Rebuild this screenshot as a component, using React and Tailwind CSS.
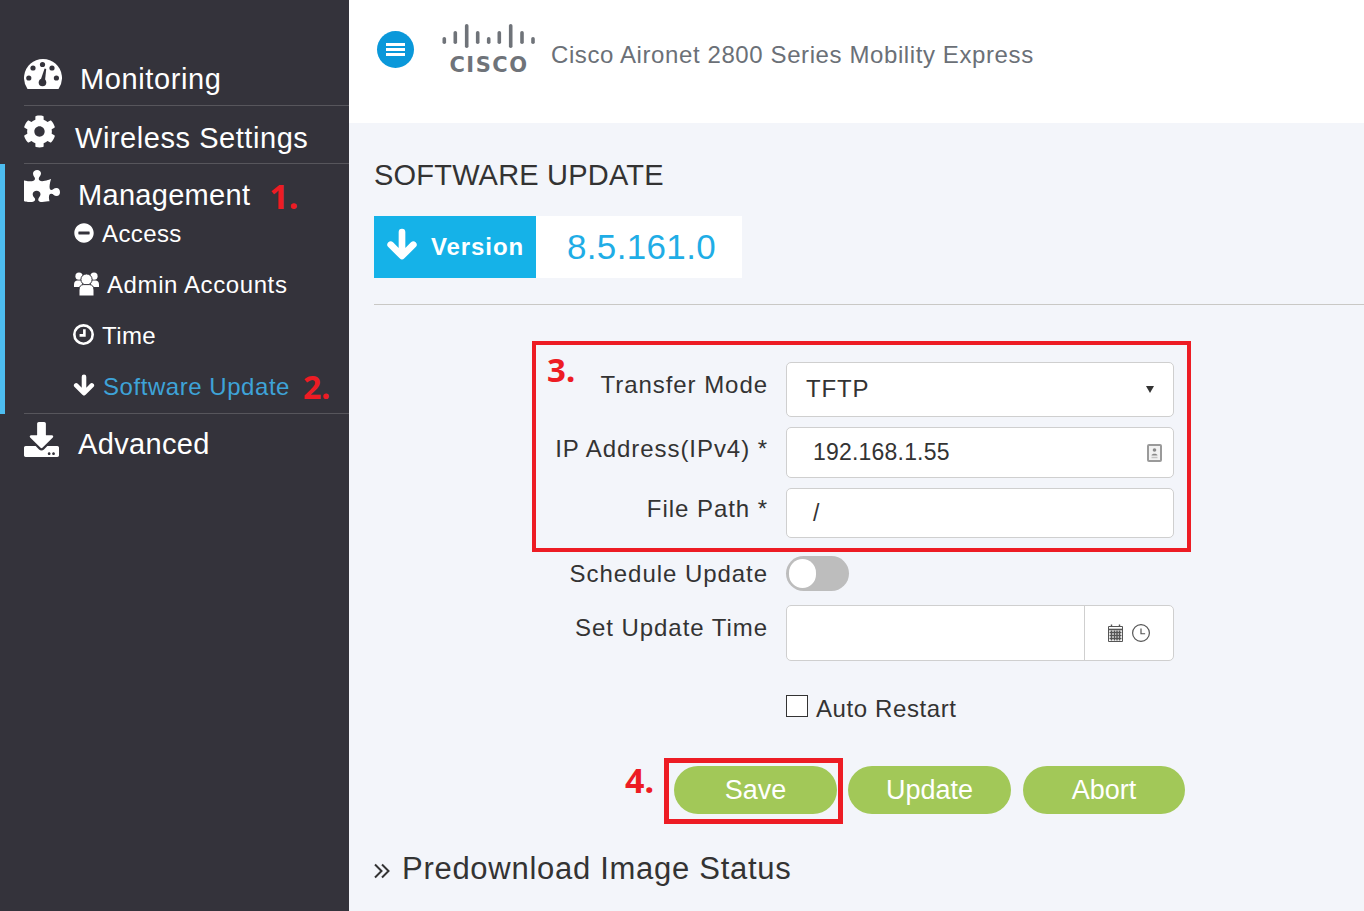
import React from "react";
import { FaCog, FaPuzzlePiece, FaMinusCircle, FaDownload } from "react-icons/fa";

const Red = ({ children, className }) => (
  <span className={"font-bold text-[#ed1c24] font-['Noto_Sans','Open_Sans',sans-serif] " + className}>{children}</span>
);

const ArrowDown = ({ className }) => (
  <svg viewBox="0 0 24 24" className={className} fill="none" stroke="currentColor" strokeWidth="5" strokeLinecap="round" strokeLinejoin="round">
    <path d="M12 3V20M3.5 12.5L12 21L20.5 12.5" />
  </svg>
);

const Gauge = ({ className }) => (
  <svg viewBox="0 0 38 30" className={className}>
    <path d="M3.5 30A19 19 0 1 1 34.5 30Z" fill="#fff" />
    <g fill="#34333b">
      <circle cx="4.8" cy="19" r="2.6" />
      <circle cx="9" cy="9" r="2.6" />
      <circle cx="18.5" cy="5.5" r="2.6" />
      <circle cx="28" cy="9" r="2.6" />
      <circle cx="32.4" cy="19" r="2.6" />
      <circle cx="18.5" cy="23.5" r="3.8" />
      <path d="M16.3 22L20.6 9.5L22.2 10L20.8 23.5Z" />
    </g>
  </svg>
);

const Users = ({ className }) => (
  <svg viewBox="0 0 25 24" className={className} fill="#fff">
    <circle cx="5" cy="4.2" r="3.6" />
    <circle cx="20" cy="4.2" r="3.6" />
    <path d="M0 15V12.5C0 10 1.5 8.6 3.5 8.6H8V15Z" />
    <path d="M25 15V12.5C25 10 23.5 8.6 21.5 8.6H17V15Z" />
    <circle cx="12.5" cy="7.5" r="5.6" stroke="#34333b" strokeWidth="1" />
    <path d="M5 24V18C5 14.5 7 12.6 9.5 12.6H15.5C18 12.6 20 14.5 20 18V24Z" stroke="#34333b" strokeWidth="1" />
  </svg>
);

const Clock = ({ className, stroke = 3, hands = "M13 6V13H7.5" }) => (
  <svg viewBox="0 0 24 24" className={className} fill="none" stroke="currentColor" strokeWidth={stroke}>
    <circle cx="12" cy="12" r={12 - stroke / 2} />
    <path d={hands} />
  </svg>
);

const Calendar = ({ className }) => (
  <svg viewBox="0 0 15 18" className={className} fill="none" stroke="currentColor">
    <path d="M.5 2.5H14.5V17.5H.5Z" />
    <path d="M3.5 .5V3M11.5 .5V3" strokeWidth="1.4" />
    <path d="M.5 5.5H14.5" strokeWidth="1.6" />
    <path d="M1.5 8.5H13.5M1.5 11.5H13.5M1.5 14.5H13.5M3.5 6.5V16.5M6.5 6.5V16.5M9 6.5V16.5M11.5 6.5V16.5" strokeWidth="1.5" />
  </svg>
);

const IdIcon = ({ className }) => (
  <svg viewBox="0 0 15 18" className={className}>
    <rect x="1" y="1" width="13" height="16" rx="1" fill="#f2f2f2" stroke="#9a9a9a" strokeWidth="2" />
    <circle cx="7.5" cy="6" r="1.8" fill="#8a8a8a" />
    <path d="M4.5 11.5C4.5 9 10.5 9 10.5 11.5Z" fill="#8a8a8a" />
    <path d="M4.5 13.5H10.5" stroke="#c4c4c4" strokeWidth="1.5" />
  </svg>
);

const Chevrons = ({ className }) => (
  <svg viewBox="0 0 16 16" className={className} fill="none" stroke="currentColor" strokeWidth="2">
    <path d="M1 1.5L7.5 8L1 14.5M8 1.5L14.5 8L8 14.5" />
  </svg>
);

function Sub({ icon, text, active, className, gap, tracking }) {
  return (
    <div className={"flex items-center h-[51px] pl-[73px] " + className}>
      <span className={"text-white " + gap}>{icon}</span>
      <span className={"text-[24px] " + tracking + " " + (active ? "text-[#3ea3d8]" : "text-white")}>{text}</span>
      {active && <Red className="text-[32px] ml-[13px] leading-none">2.</Red>}
    </div>
  );
}

function CiscoLogo() {
  const bars = [[3.3, 13, 20], [14.3, 7, 20], [25.7, 0, 24], [36.7, 7, 20], [47.7, 13, 20], [58.3, 7, 20], [69.7, 0, 24], [81, 7, 20], [92, 13, 20]];
  return (
    <div className="flex flex-col items-center w-[96px]">
      <svg width="96" height="24" viewBox="0 0 96 24" fill="none" stroke="#6f7379" strokeWidth="3.6" strokeLinecap="round">
        {bars.map(([x, a, b], i) => (
          <line key={i} x1={x} x2={x} y1={a + 1.8} y2={b - 1.8} />
        ))}
      </svg>
      <span className="text-[#6f7379] text-[21px] leading-[22px] font-bold tracking-[1.5px] font-['DejaVu_Sans',sans-serif] mt-[6px]">CISCO</span>
    </div>
  );
}

function Row({ label, children, className, labelClass }) {
  return (
    <div className={"flex " + className}>
      <div className={"w-[232px] text-right text-[#333] text-[24px] tracking-[0.95px] leading-[28px] " + labelClass}>{label}</div>
      <div className="ml-[18px] w-[388px]">{children}</div>
    </div>
  );
}

const field = "w-full bg-white border border-[#cfcfcf] rounded-[5px] flex items-center text-[#333] text-[24px]";

const Btn = ({ children, className }) => (
  <div className={"h-[48px] rounded-[24px] bg-[#a2c858] text-white text-[27px] flex items-center justify-center " + className}>{children}</div>
);

export default function App() {
  return (
    <div className="flex w-[1364px] h-[911px] overflow-hidden font-['Liberation_Sans',Arial,sans-serif]">
      <aside className="w-[349px] shrink-0 bg-[#34333b] pt-[48px] text-white">
        <div className="ml-[24px] h-[58px] border-b border-[#57565c] flex items-center">
          <Gauge className="w-[38px] h-[30px] -mt-[6px]" />
          <span className="ml-[18px] text-[29px] tracking-[0.6px] mt-[6px]">Monitoring</span>
        </div>
        <div className="ml-[24px] h-[58px] border-b border-[#57565c] flex items-center">
          <FaCog className="w-[33px] h-[33px] -mt-[7px] -ml-[1px]" />
          <span className="ml-[19px] text-[29px] tracking-[0.55px] mt-[9px]">Wireless Settings</span>
        </div>
        <div className="border-l-[5px] border-[#4dbdf0] h-[250px]">
          <div className="ml-[19px] flex items-center h-[50px]">
            <FaPuzzlePiece className="w-[36px] h-[36px] -mt-[6px]" />
            <span className="ml-[18px] text-[29px] tracking-[0.3px] mt-[13px]">Management</span>
            <Red className="text-[34px] ml-[19px] leading-none mt-[13px]">1.</Red>
          </div>
          <div className="-ml-[5px]">
            <div className="flex items-center h-[37px] pl-[74px] pt-[2px]">
              <FaMinusCircle className="text-white w-[20px] h-[20px] mr-[8px] -mt-[1px]" />
              <span className="text-[24px] tracking-[0.4px]">Access</span>
            </div>
            <Sub icon={<Users className="w-[25px] h-[24px]" />} text="Admin Accounts" tracking="tracking-[0.6px]" gap="ml-[1px] mr-[8px] -mt-[2px]" className="mt-[8px]" />
            <Sub icon={<Clock className="w-[21px] h-[21px]" />} text="Time" tracking="tracking-[0.4px]" gap="mr-[8px] -mt-[3px]" />
            <Sub icon={<ArrowDown className="w-[22px] h-[22px]" />} text="Software Update" tracking="tracking-[0.55px]" active gap="mr-[8px] -mt-[3px]" />
          </div>
        </div>
        <div className="ml-[24px] -mt-[1px] border-t border-[#57565c] flex items-center h-[61px]">
          <FaDownload className="w-[35px] h-[35px] -mt-[10px]" />
          <span className="ml-[19px] text-[29px] tracking-[0.35px] mt-[2px]">Advanced</span>
        </div>
      </aside>

      <main className="flex-1 bg-[#f3f5fa] min-w-0">
        <header className="h-[123px] bg-white flex items-start">
          <div className="ml-[28px] mt-[31px] w-[37px] h-[37px] rounded-full bg-[#0a98da] flex flex-col items-center justify-center gap-[2px]">
            <span className="w-[19px] h-[3px] bg-white" />
            <span className="w-[19px] h-[3px] bg-white" />
            <span className="w-[19px] h-[3px] bg-white" />
          </div>
          <div className="ml-[27px] mt-[24px]"><CiscoLogo /></div>
          <div className="ml-[14px] mt-[39px] text-[24px] leading-[32px] tracking-[0.6px] text-[#6b7077]">Cisco Aironet 2800 Series Mobility Express</div>
        </header>

        <div className="pl-[25px]">
          <h1 className="mt-[34px] text-[29px] leading-[36px] text-[#333] tracking-[0.2px]">SOFTWARE UPDATE</h1>
          <div className="mt-[23px] flex h-[62px] w-[368px]">
            <div className="w-[162px] bg-[#15b2e8] text-white flex items-center pl-[12px]">
              <ArrowDown className="w-[32px] h-[32px] -mt-[6px]" />
              <span className="ml-[13px] font-bold text-[24px] tracking-[0.9px]">Version</span>
            </div>
            <div className="flex-1 bg-white text-[#1fade6] text-[35px] tracking-[0.35px] flex items-center justify-center pl-[5px]">8.5.161.0</div>
          </div>
          <div className="mt-[26px] border-t border-[#c9c8c5]" />

          <div className="ml-[158px] mt-[36px] w-[659px] h-[211px] border-4 border-[#ed1c24] relative pt-[17px]">
            <Red className="absolute left-[11px] top-[3px] text-[33px] leading-[44px]">3.</Red>
            <Row label="Transfer Mode" labelClass="pt-[9px]">
              <div className={field + " h-[55px] pl-[19px] pr-[19px] justify-between"}>
                <span className="tracking-[0.8px] -mt-[2px]">TFTP</span>
                <span className="w-0 h-0 border-x-[4px] border-x-transparent border-t-[7px] border-t-[#333]" />
              </div>
            </Row>
            <Row label="IP Address(IPv4) *" className="mt-[10px]" labelClass="pt-[8px]">
              <div className={field + " h-[51px] pl-[26px] pr-[11px] justify-between"}>
                <span className="text-[23px] tracking-[0.2px] -mt-[1px]">192.168.1.55</span>
                <IdIcon className="w-[15px] h-[18px]" />
              </div>
            </Row>
            <Row label="File Path *" className="mt-[10px]" labelClass="pt-[7px]">
              <div className={field + " h-[50px] pl-[26px]"}>
                <span className="text-[23px]">/</span>
              </div>
            </Row>
          </div>

          <div className="ml-[162px] mt-[4px]">
            <Row label="Schedule Update" labelClass="pt-[4px]">
              <div className="w-[63px] h-[35px] rounded-full bg-[#bdbdbd] p-[3px]">
                <div className="w-[27px] h-[29px] rounded-full bg-white" />
              </div>
            </Row>
            <Row label="Set Update Time" className="mt-[14px]" labelClass="pt-[9px]">
              <div className={field + " h-[56px]"}>
                <div className="flex-1" />
                <div className="w-[89px] h-full border-l border-[#cfcfcf] flex items-center justify-center gap-[9px] text-[#555]">
                  <Calendar className="w-[15px] h-[18px]" />
                  <Clock className="w-[18px] h-[18px]" stroke={1.6} hands="M12 6V13H17.5" />
                </div>
              </div>
            </Row>
            <Row label="" className="mt-[34px]">
              <div className="flex items-center h-[28px]">
                <div className="w-[22px] h-[22px] border border-[#333] bg-white -mt-[6px]" />
                <span className="ml-[8px] text-[24px] tracking-[0.6px] text-[#333]">Auto Restart</span>
              </div>
            </Row>
          </div>

          <div className="ml-[251px] mt-[35px] flex items-center">
            <Red className="text-[34px] leading-none w-[39px] -mt-[22px]">4.</Red>
            <div className="border-[5px] border-[#ed1c24] w-[179px] h-[66px] pl-[5px] pt-[3px]">
              <Btn className="w-[163px]">Save</Btn>
            </div>
            <Btn className="w-[163px] ml-[5px] -mt-[2px]">Update</Btn>
            <Btn className="w-[162px] ml-[12px] -mt-[2px]">Abort</Btn>
          </div>

          <h2 className="mt-[23px] flex items-center text-[31px] leading-[44px] text-[#333] tracking-[0.72px]">
            <Chevrons className="w-[16px] h-[16px] mr-[12px] mt-[3px]" />
            Predownload Image Status
          </h2>
        </div>
      </main>
    </div>
  );
}
